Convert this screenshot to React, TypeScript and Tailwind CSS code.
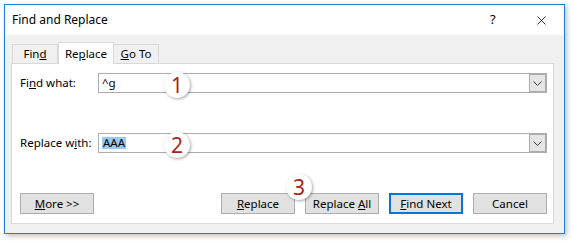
import { X } from "lucide-react";

const font = { fontFamily: '"Noto Sans", "Open Sans", sans-serif' };

function Btn({ children, primary = false }: { children: React.ReactNode; primary?: boolean }) {
  return (
    <div
      className={
        "w-[74px] h-[21px] flex items-center justify-center text-[11.5px] text-black bg-[#e1e1e1] " +
        (primary ? "border-2 border-[#0078d7]" : "border border-[#adadad]")
      }
    >
      <span>{children}</span>
    </div>
  );
}

function Combo({ children }: { children?: React.ReactNode }) {
  return (
    <div className="flex-1 h-[20px] border border-[#abadb3] bg-white flex items-center">
      <div className="flex-1 pl-[3px] text-[11.5px] text-black leading-none flex items-center">{children}</div>
      <div className="w-[17px] h-[18px] bg-[#e5e5e5] border border-[#acacac] flex items-center justify-center">
        <svg width="9" height="5" viewBox="0 0 9 5">
          <path d="M0.5 0.5 L4.5 4.5 L8.5 0.5" fill="none" stroke="#404040" strokeWidth="1" />
        </svg>
      </div>
    </div>
  );
}

function Bubble({ n, className }: { n: string; className: string }) {
  return (
    <div
      className={
        "absolute w-[26px] h-[26px] rounded-full bg-white shadow-[1px_1px_3px_rgba(0,0,0,0.35)] flex items-center justify-center text-[21px] text-[#a5261b] leading-none " +
        className
      }
    >
      {n}
    </div>
  );
}

export default function App() {
  return (
    <div className="w-[572px] h-[242px] bg-white pt-[4px] pl-[4px]" style={font}>
      <div className="relative w-[561px] h-[230px] border border-[#1883d7] bg-[#f0f0f0] shadow-[2px_2px_5px_rgba(0,0,0,0.25)] flex flex-col">
        {/* title bar */}
        <div className="h-[30px] bg-white flex items-center pl-[7px] text-[12px] text-black">
          <span className="flex-1">Find and Replace</span>
          <span className="w-[14px] text-[13px] mr-[30px]">?</span>
          <X className="w-[15px] h-[15px] mr-[15px]" strokeWidth={1.3} />
        </div>

        {/* tabs */}
        <div className="flex items-end pl-[7px] h-[28px] text-[11.5px] text-black">
          <div className="w-[46px] h-[19px] border border-b-0 border-[#d9d9d9] flex items-center justify-center">
            <span>
              Fin<u>d</u>
            </span>
          </div>
          <div className="relative z-10 w-[56px] h-[22px] mb-[-1px] bg-white border border-b-0 border-[#d9d9d9] flex items-center justify-center">
            <span>
              Re<u>p</u>lace
            </span>
          </div>
          <div className="w-[45px] h-[19px] border border-b-0 border-l-0 border-[#d9d9d9] flex items-center justify-center">
            <span>
              <u>G</u>o To
            </span>
          </div>
        </div>

        {/* panel */}
        <div className="ml-[6px] w-[543px] h-[161px] bg-white border border-[#d9d9d9] pt-[9px] pl-[8px] pr-[6px] flex flex-col text-[11.5px] text-black">
          <div className="flex items-center">
            <div className="w-[78px]">
              Fi<u>n</u>d what:
            </div>
            <Combo>
              <span>^g</span>
            </Combo>
          </div>
          <div className="flex items-center mt-[40px]">
            <div className="w-[78px]">
              Replace w<u>i</u>th:
            </div>
            <Combo>
              <span className="bg-[#99c9ef] px-[1px]">AAA</span>
            </Combo>
          </div>
          <div className="flex items-center mt-[40px]">
            <Btn>
              <u>M</u>ore &gt;&gt;
            </Btn>
            <div className="flex-1" />
            <div className="flex gap-[10px]">
              <Btn>
                <u>R</u>eplace
              </Btn>
              <Btn>
                Replace <u>A</u>ll
              </Btn>
              <Btn primary>
                <u>F</u>ind Next
              </Btn>
              <Btn>Cancel</Btn>
            </div>
          </div>
        </div>

        <Bubble n="1" className="left-[159px] top-[67px]" />
        <Bubble n="2" className="left-[159px] top-[127px]" />
        <Bubble n="3" className="left-[281px] top-[169px]" />
      </div>
    </div>
  );
}
